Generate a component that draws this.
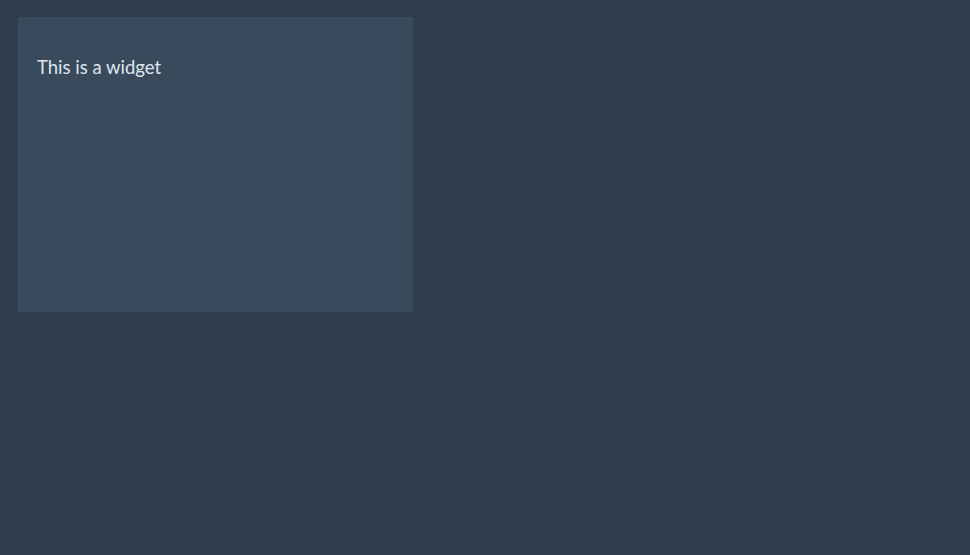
export default function App() {
  return (
    <div className="w-[970px] h-[555px] bg-[#2e3e4f] pt-[17px] pl-[18px]">
      <div className="w-[395px] h-[295px] bg-[#394a5c] px-[19px] pt-[39px]">
        <p className="text-[18.5px] leading-[22px] text-[#dfe5ec] font-['Lato','Noto_Sans',sans-serif]">
          This is a widget
        </p>
      </div>
    </div>
  )
}
